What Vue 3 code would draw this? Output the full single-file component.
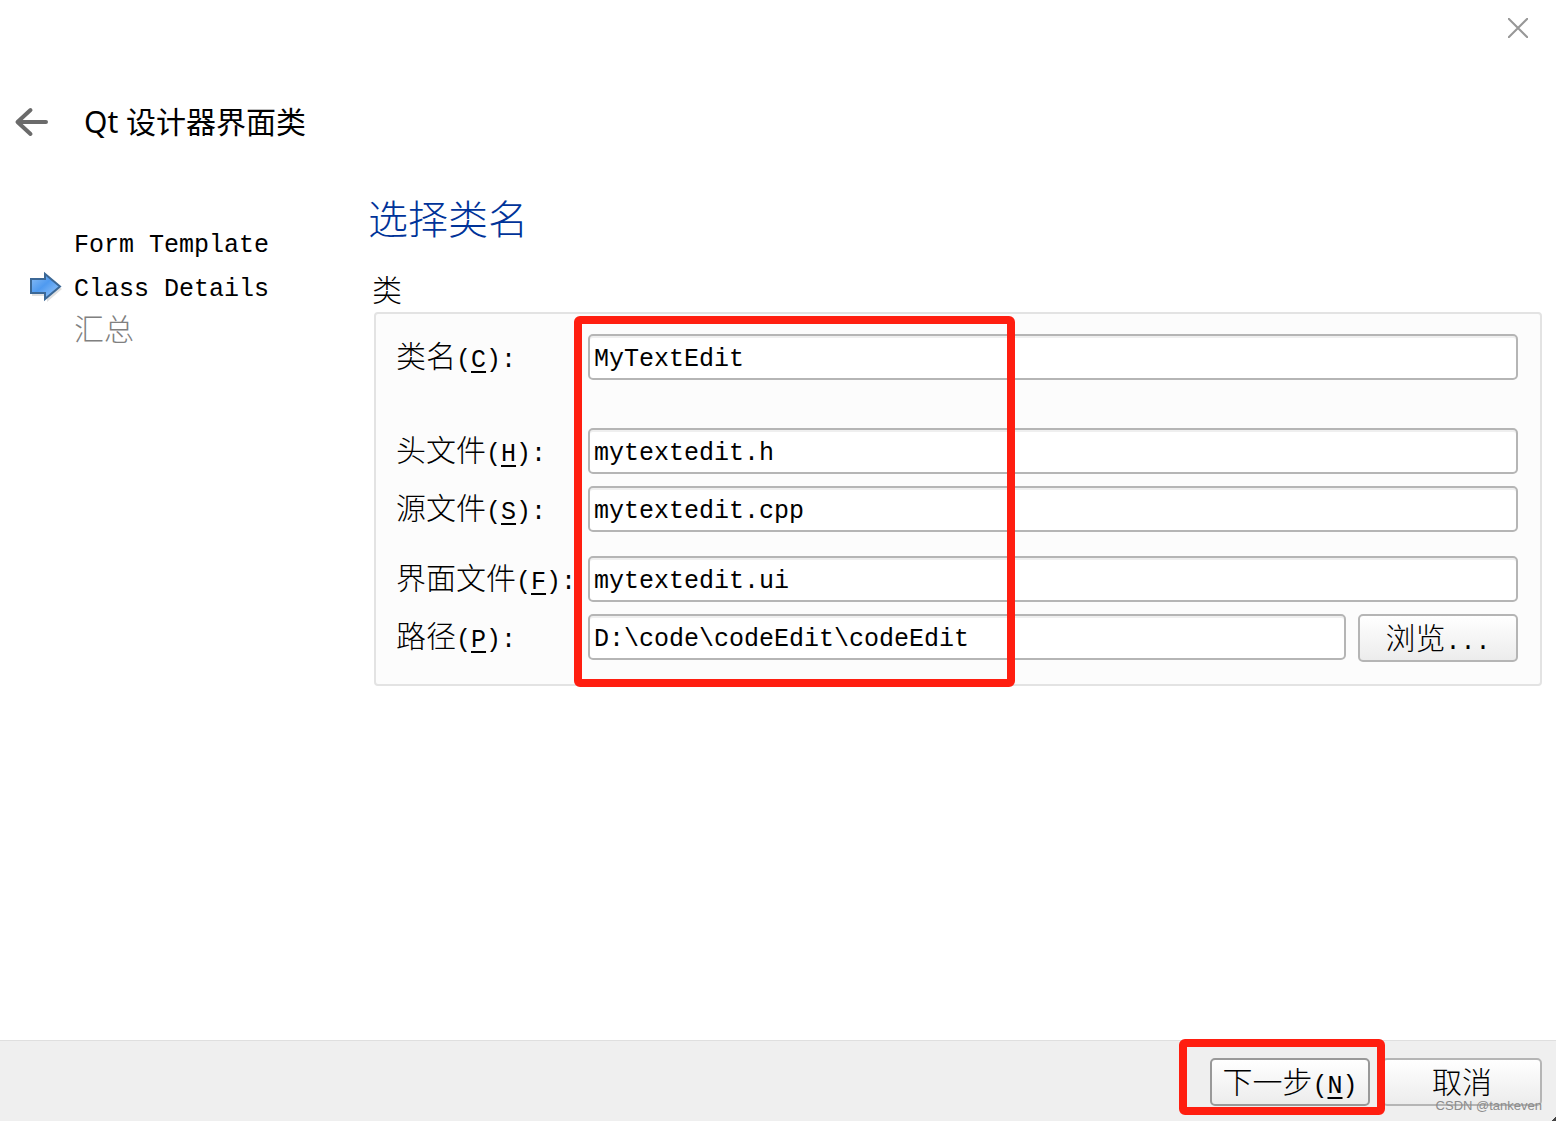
<script setup>
import { reactive } from 'vue'

const steps = [
  { text: 'Form Template', state: 'done', latin: true },
  { text: 'Class Details', state: 'current', latin: true },
  { text: '汇总', state: 'pending', latin: false }
]

const fields = reactive([
  { id: 'class-name', label: '类名', key: 'C', value: 'MyTextEdit', gap: 'wide' },
  { id: 'header-file', label: '头文件', key: 'H', value: 'mytextedit.h', gap: 'tight' },
  { id: 'source-file', label: '源文件', key: 'S', value: 'mytextedit.cpp', gap: 'medium' },
  { id: 'form-file', label: '界面文件', key: 'F', value: 'mytextedit.ui', gap: 'tight' },
  { id: 'path', label: '路径', key: 'P', value: 'D:\\code\\codeEdit\\codeEdit', gap: 'none', browse: true }
])
</script>

<template>
  <div class="wizard">
    <div class="titlebar">
      <button type="button" class="close" aria-label="Close">
        <svg width="20" height="20" viewBox="0 0 20 20" fill="none" stroke="#979797" stroke-width="2">
          <path d="M0 0L20 20M20 0L0 20" />
        </svg>
      </button>
    </div>

    <header class="header">
      <button type="button" class="back" aria-label="Back">
        <svg width="34" height="30" viewBox="0 0 34 30" fill="none" stroke="#6b6b6b" stroke-width="4" stroke-linecap="round" stroke-linejoin="round">
          <path d="M16.500 3L3.500 15L16.500 27M4 15H32" />
        </svg>
      </button>
      <h1 class="title">Qt 设计器界面类</h1>
    </header>

    <div class="body">
      <ol class="steps">
        <li v-for="step in steps" :key="step.text" class="step" :class="step.state">
          <span class="marker">
            <svg v-if="step.state === 'current'" width="34" height="32" viewBox="0 0 34 32">
              <defs>
                <linearGradient id="arrow-fill" x1="0" y1="0" x2="1" y2="1">
                  <stop offset="0" stop-color="#8fc0f6" />
                  <stop offset="0.45" stop-color="#4f9af0" />
                  <stop offset="1" stop-color="#a3cdfa" />
                </linearGradient>
              </defs>
              <path d="M4 11H19V6L34 18L19 31V25H4Z" fill="#000" opacity="0.12" />
              <path d="M3 8H17V3L32 15.500L17 28V22H3Z" fill="url(#arrow-fill)" stroke="#3c6896" stroke-width="2" />
            </svg>
          </span>
          <span class="step-text"><span :class="{ latin: step.latin }">{{ step.text }}</span></span>
        </li>
      </ol>

      <main class="main">
        <h2 class="heading">选择类名</h2>
        <fieldset class="group">
          <legend class="legend">类</legend>
          <div class="panel">
            <div v-for="field in fields" :key="field.id" class="row" :class="field.gap">
              <label class="label" :for="field.id">{{ field.label }}<span class="latin">(<u>{{ field.key }}</u>):</span></label>
              <input :id="field.id" v-model="field.value" class="input latin" type="text" spellcheck="false" />
              <button v-if="field.browse" type="button" class="button">浏览<span class="latin">...</span></button>
            </div>
            <div class="mark fields-mark"></div>
          </div>
        </fieldset>
      </main>
    </div>

    <footer class="footer">
      <div class="next">
        <button type="button" class="button primary">下一步<span class="latin">(<u>N</u>)</span></button>
        <div class="mark next-mark"></div>
      </div>
      <button type="button" class="button">取消</button>
      <span class="watermark">CSDN @tankeven</span>
    </footer>
  </div>
</template>

<style>
body {
  margin: 0;
  background: #fff;
}
</style>

<style scoped>
.wizard {
  box-sizing: border-box;
  min-height: 100vh;
  display: flex;
  flex-direction: column;
  background: #fff;
  color: #000;
  font-family: "Noto Sans CJK SC", sans-serif;
  font-size: 30px;
  font-weight: 300;
  line-height: 40px;
}

.latin {
  font-family: "Liberation Mono", monospace;
  font-size: 25px;
  font-weight: 400;
  line-height: 1;
}

u {
  text-decoration-thickness: 2px;
  text-underline-offset: 4px;
}

.titlebar {
  display: flex;
  justify-content: flex-end;
  padding: 18px 28px 0 0;
}

.close,
.back {
  display: flex;
  padding: 0;
  border: 0;
  background: none;
}

.header {
  display: flex;
  align-items: center;
  gap: 36px;
  padding: 62px 14px 0;
}

.title {
  margin: 0;
  font-family: "Noto Sans", "Noto Sans CJK SC", sans-serif;
  font-size: 30px;
  font-weight: 400;
  line-height: 44px;
}

.body {
  flex: 1;
  display: flex;
  padding-right: 14px;
}

.steps {
  flex: none;
  width: 368px;
  margin: 0;
  padding: 77px 0 0;
  list-style: none;
}

.step {
  display: flex;
  height: 44px;
}

.step-text {
  line-height: 36px;
}

.marker {
  display: flex;
  align-items: center;
  width: 46px;
  padding-left: 28px;
}

.pending {
  color: #808080;
}

.main {
  flex: 1;
  min-width: 0;
  padding-top: 47px;
}

.heading {
  margin: 0;
  color: #003399;
  font-size: 40px;
  font-weight: 300;
  line-height: 52px;
}

.group {
  min-width: 0;
  margin: 25px 0 0 4px;
  padding: 0;
  border: 0;
}

.legend {
  height: 44px;
  padding: 0;
}

.panel {
  position: relative;
  margin-left: 2px;
  padding: 20px 22px 22px 20px;
  border: 2px solid #e3e3e3;
  border-radius: 4px;
  background: #fcfcfc;
}

.row {
  display: flex;
  align-items: flex-start;
}

.wide {
  margin-bottom: 48px;
}

.medium {
  margin-bottom: 24px;
}

.tight {
  margin-bottom: 12px;
}

.label {
  flex: none;
  width: 192px;
  white-space: nowrap;
}

.input {
  box-sizing: border-box;
  flex: 1;
  min-width: 0;
  height: 46px;
  padding: 4px 3px 0 4px;
  border: 2px solid #b5b5b5;
  border-radius: 5px;
  outline: 0;
  background: #fff;
  box-shadow: inset 0 2px 0 #efefef;
  color: #000;
}

.button {
  box-sizing: border-box;
  flex: none;
  width: 160px;
  height: 48px;
  padding: 0 0 4px;
  border: 2px solid #b5b5b5;
  border-radius: 5px;
  background: linear-gradient(#fff, #ececec);
  color: #000;
  font-family: inherit;
  font-size: 30px;
  font-weight: 300;
  line-height: 40px;
  white-space: nowrap;
}

.row .button {
  margin-left: 12px;
}

.primary {
  border-color: #999;
}

.mark {
  position: absolute;
  box-sizing: border-box;
  border: 8px solid #ff1e10;
  border-radius: 6px;
  pointer-events: none;
}

.fields-mark {
  top: 2px;
  bottom: -3px;
  left: 198px;
  width: 441px;
}

.footer {
  position: relative;
  display: flex;
  justify-content: flex-end;
  gap: 12px;
  padding: 17px 14px 15px;
  border-top: 1px solid #dfdfdf;
  background: #efefef;
}

.footer::after {
  content: "";
  position: absolute;
  right: 0;
  bottom: 0;
  width: 4px;
  height: 4px;
  background: linear-gradient(135deg, transparent 50%, #444 50%);
}

.next {
  position: relative;
  display: flex;
}

.next-mark {
  z-index: 1;
  top: -19px;
  right: -15px;
  bottom: -9px;
  left: -31px;
}

.watermark {
  position: absolute;
  right: 14px;
  bottom: 6px;
  color: #8c8c8c;
  font-family: "Liberation Sans", Arial, sans-serif;
  font-size: 13px;
  font-weight: 400;
  line-height: 18px;
}
</style>
